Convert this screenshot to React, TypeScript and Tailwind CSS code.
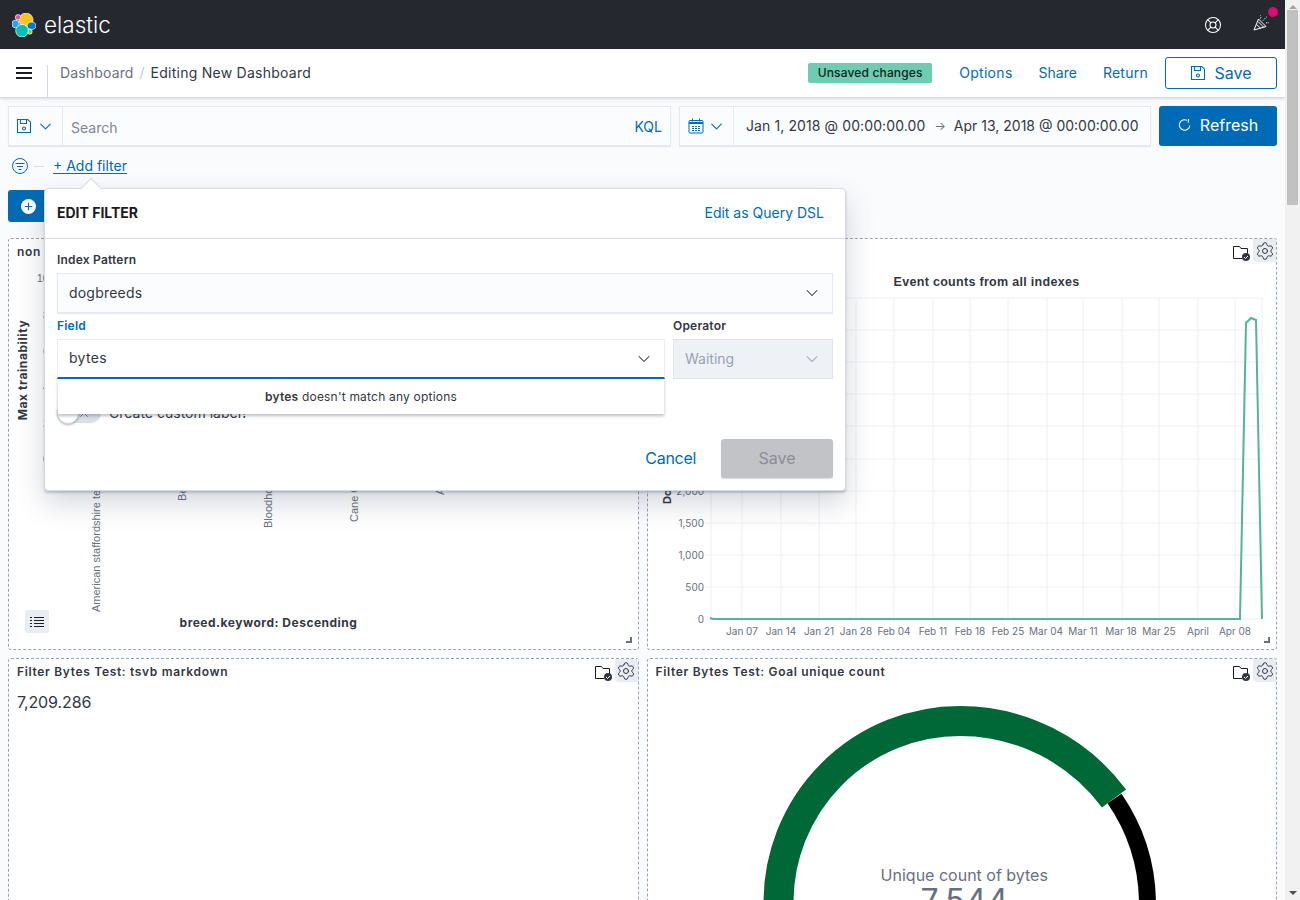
import { ChevronDown, LifeBuoy, Settings, X } from 'lucide-react'

const SaveIcon = ({ className }: { className?: string }) => (
  <svg viewBox="0 0 16 16" fill="none" stroke="currentColor" strokeWidth="1.1" className={className}>
    <path d="M1.5 1.5h10.3l2.7 2.7v10.3h-13z" />
    <path d="M4.5 1.5v4h6v-4" />
    <circle cx="8" cy="10.5" r="1.5" />
  </svg>
)

const FolderCheck = () => (
  <svg viewBox="0 0 18 16" className="w-[18px] h-4" fill="none">
    <path d="M.5 1.5h6l1.5 2h6.5v7M.5 1.5v12h9" stroke="#1a1c21" />
    <circle cx="13" cy="12" r="4" fill="#343741" />
    <path d="M11 12l1.5 1.5 2.5-2.5" stroke="#fff" strokeWidth="1" />
  </svg>
)

function PanelHeader({ title }: { title: string }) {
  return (
    <div className="h-[25px] flex items-center justify-between pl-2 text-xs font-semibold tracking-[0.67px] text-[#343741]">
      <span className="pt-[1px]">{title}</span>
      <div className="flex items-center self-start">
        <span className="mr-[2px] mt-1 flex"><FolderCheck /></span>
        <span className="w-[23px] h-[23px] bg-[#e9edf3] rounded-bl flex items-center justify-center text-[#343741]">
          <Settings size={20} strokeWidth={1.2} />
        </span>
      </div>
    </div>
  )
}

const ResizeHandle = () => (
  <span className="absolute right-[6px] bottom-[6px] w-[6px] h-[6px] border-r-2 border-b-2 border-[#69707d]" />
)

const breeds = [
  { name: 'American staffordshire terrier', x: 96, y: 612 },
  { name: 'Beagle', x: 182, y: 501 },
  { name: 'Bloodhound', x: 268, y: 528 },
  { name: 'Cane Corso', x: 354, y: 522 },
  { name: 'Akita', x: 440, y: 495 },
]

function BreedChart() {
  return (
    <svg width="629" height="385" className="block">
      <g transform="translate(-9,-264)" fontFamily="Liberation Sans, sans-serif">
        {[['10', 278], ['8', 315], ['6', 351], ['4', 387], ['2', 423], ['0', 459]].map(([t, y]) => (
          <text key={t} x="49" y={Number(y) + 4} textAnchor="end" fontSize="11" fill="#69707d">{t}</text>
        ))}
        <text transform="translate(27,370) rotate(-90)" textAnchor="middle" fontSize="12" fontWeight="700" letterSpacing="0.6" fontFamily="Inter, sans-serif" fill="#343741">Max trainability</text>
        {breeds.map(b => (
          <text key={b.name} transform={`translate(${b.x + 4},${b.y}) rotate(-90)`} fontSize="11" fill="#69707d">{b.name}</text>
        ))}
        <text x="268.5" y="627" textAnchor="middle" fontSize="12" fontWeight="700" letterSpacing="0.5" fontFamily="Inter, sans-serif" fill="#343741">breed.keyword: Descending</text>
      </g>
    </svg>
  )
}

const gridX = [711, 742, 781, 819, 856, 894, 933, 970, 1008, 1047, 1083, 1122, 1159, 1198, 1235, 1262]
const gridY = [298, 330, 362, 394, 426, 459, 491, 523, 555, 587, 619]
const xLabels = [
  ['Jan 07', 742], ['Jan 14', 781], ['Jan 21', 819], ['Jan 28', 856], ['Feb 04', 894], ['Feb 11', 933], ['Feb 18', 970],
  ['Feb 25', 1008], ['Mar 04', 1046], ['Mar 11', 1083], ['Mar 18', 1121], ['Mar 25', 1159], ['April', 1198], ['Apr 08', 1235],
] as const
const yLabels = [['2,000', 491], ['1,500', 523], ['1,000', 555], ['500', 587], ['0', 619]] as const

function EventsChart() {
  return (
    <svg width="629" height="385" className="block">
      <g transform="translate(-648,-264)" fontFamily="Inter, sans-serif">
        <text x="986.5" y="286" textAnchor="middle" fontSize="12.5" fontWeight="700" fontFamily="Liberation Sans, sans-serif" letterSpacing="0.3" fill="#343741">Event counts from all indexes</text>
        {gridX.map(x => <line key={x} x1={x} x2={x} y1="298" y2="623" stroke="#eef0f3" />)}
        {gridY.map(y => <line key={y} x1="706" x2="1262" y1={y} y2={y} stroke="#eef0f3" />)}
        {yLabels.map(([t, y]) => (
          <text key={t} x="704" y={y + 4} textAnchor="end" fontSize="10" fill="#69707d">{t}</text>
        ))}
        {xLabels.map(([t, x]) => (
          <text key={t} x={x} y="635" textAnchor="middle" fontSize="10" fill="#69707d">{t}</text>
        ))}
        <text transform="translate(671,504) rotate(-90)" fontSize="11" fontWeight="700" fill="#343741">Do</text>
        <polyline points="710,618 713,619 1240,619 1246,323 1251,318 1256,320 1262,619" fill="none" stroke="#54b399" strokeWidth="2" />
      </g>
    </svg>
  )
}

function GaugeChart() {
  return (
    <div className="relative">
      <svg width="629" height="220" className="block">
        <g transform="translate(-648,-684)">
          <path d="M 1114.5 798.5 A 187.5 187.5 0 0 1 1147.5 903" fill="none" stroke="#000" strokeWidth="17" />
          <path d="M 778.5 903 A 181.5 181.5 0 0 1 960 721 A 191.8 191.8 0 0 1 1114 798.5" fill="none" stroke="#006837" strokeWidth="30" />
        </g>
      </svg>
      <div className="absolute left-0 right-0 top-[181px] flex flex-col items-center text-[#69707d]">
        <span className="text-base leading-5 ml-[5px]">Unique count of bytes</span>
        <span className="text-[32px] leading-8 tracking-[1px] ml-[6px]">7,544</span>
      </div>
    </div>
  )
}

function FilterModal() {
  return (
    <div className="absolute left-[44px] top-[188px] w-[802px] h-[303px] bg-white rounded-[4px] border border-[#d3dae6] shadow-[0_2px_2px_rgba(60,70,90,0.25),0_12px_28px_rgba(60,70,90,0.22)] text-[#343741]">
      <span className="absolute left-[38px] top-[-8px] w-[16px] h-[16px] rotate-45 bg-white border-l border-t border-[#d3dae6]" />
      <div className="relative h-[50px] border-b border-[#d3dae6] flex items-center justify-between pl-3 pr-[21px] pb-[1px]">
        <span className="text-sm font-bold text-[#1a1c21]">EDIT FILTER</span>
        <span className="text-sm text-[#006bb4]">Edit as Query DSL</span>
      </div>
      <div className="px-3 pt-[13px]">
        <div className="text-xs font-semibold h-[15px] leading-[15px] mb-[6px] tracking-[0.2px]">Index Pattern</div>
        <div className="h-10 bg-[#fbfcfd] border border-[#e4e8ef] shadow-[0_1px_1px_rgba(60,70,90,0.12)] flex items-center justify-between pl-[11px] pr-[10px] text-sm">
          <span className="tracking-[0.2px]">dogbreeds</span>
          <ChevronDown size={20} strokeWidth={1.25} />
        </div>
        <div className="grid grid-cols-[608px_160px] gap-x-2 mt-[5px]">
          <div className="relative">
            <div className="text-xs font-semibold h-[15px] leading-[15px] mb-[6px] text-[#006bb4] tracking-[0.2px]">Field</div>
            <div className="h-10 bg-white border border-[#e9ecf1] border-b-2 border-b-[#006bb4] flex items-center justify-between pl-[11px] pr-[10px] text-sm">
              <span className="tracking-[0.3px] pb-[2px]">bytes</span>
              <ChevronDown size={20} strokeWidth={1.25} />
            </div>
            <div className="absolute z-10 left-[1px] right-[1px] top-[61px] h-[35px] bg-white shadow-[0_2px_3px_rgba(60,70,90,0.35)] flex items-center justify-center text-xs tracking-[0.2px]">
              <span><b className="font-semibold">bytes</b> doesn't match any options</span>
            </div>
          </div>
          <div>
            <div className="text-xs font-semibold h-[15px] leading-[15px] mb-[6px] tracking-[0.2px]">Operator</div>
            <div className="h-10 bg-[#eef2f7] border border-[#dfe3ea] flex items-center justify-between pl-[11px] pr-[10px] text-sm text-[#98a2b3]">
              <span>Waiting</span>
              <ChevronDown size={20} strokeWidth={1.25} />
            </div>
          </div>
        </div>
        <div className="mt-6 h-5 flex items-center gap-2">
          <span className="relative w-[44px] h-5 rounded-full bg-[#d9dfe8] flex items-center justify-end pr-[6px] text-[#343741]">
            <span className="absolute left-0 top-[-1px] w-[22px] h-[22px] rounded-full bg-white border border-[#d3dae6] shadow-[0_1px_2px_rgba(60,70,90,0.4)]" />
            <X size={14} strokeWidth={1} className="mr-[4px]" />
          </span>
          <span className="text-sm">Create custom label?</span>
        </div>
        <div className="mt-4 flex justify-end items-center">
          <span className="text-base tracking-[-0.3px] text-[#006bb4] mr-[25px] pb-[2px]">Cancel</span>
          <span className="w-[112px] h-[39px] rounded-[3px] bg-[#c2c3c6] shadow-[0_1px_1px_rgba(60,70,90,0.2)] flex items-center justify-center text-base text-[#8b8d94] pb-[2px]">Save</span>
        </div>
      </div>
    </div>
  )
}

export default function App() {
  return (
    <div className="flex w-[1300px] h-[900px] overflow-hidden font-['Inter',sans-serif] text-[#343741]">
      <div className="relative w-[1285px] h-[900px] overflow-hidden bg-[#fafbfd]">
        {/* top nav */}
        <header className="h-[49px] bg-[#25282f] flex items-center justify-between pl-3 pr-4">
          <div className="flex items-center gap-2">
            <svg viewBox="0 0 24 24" className="w-6 h-6" stroke="#fff" strokeWidth="0.7">
              <circle cx="14" cy="7" r="7" fill="#fec514" />
              <circle cx="6" cy="4.3" r="2.7" fill="#f04e98" />
              <ellipse cx="3.6" cy="11" rx="3.6" ry="4" fill="#1ba9f5" />
              <ellipse cx="19.5" cy="12.7" rx="4.3" ry="3.7" fill="#0077cc" />
              <circle cx="17.7" cy="18.7" r="2.5" fill="#93c90e" />
              <circle cx="10" cy="17.7" r="6.3" fill="#00bfb3" />
            </svg>
            <span className="text-[22.5px] font-light text-white">elastic</span>
          </div>
          <div className="flex items-center">
            <LifeBuoy size={18} strokeWidth={1.4} className="text-white mr-[31px]" />
            <span className="relative mb-1">
              <svg viewBox="0 0 16 17" className="w-4 h-[17px] block" fill="none" stroke="#fff" strokeWidth="1">
                <path d="M1 16L5.5 5l7.5 7.5z" />
                <path d="M3.5 10.5l4.5 4M5 7.5l6 6" />
                <path d="M7.5 4.5c.5-1 .5-2 0-3M13 9c1-.5 2-.5 3 0M10 6.5l4-4" strokeDasharray="1.2 1.2" />
              </svg>
              <span className="absolute left-[15px] top-[-7px] w-[10px] h-[10px] rounded-full bg-[#dd0a73]" />
            </span>
          </div>
        </header>

        {/* breadcrumbs / actions */}
        <div className="h-[49px] bg-white border-b border-[#d3dae6] shadow-[0_1px_3px_rgba(60,70,90,0.18)] flex items-center justify-between pl-4 pr-2 relative">
          <div className="flex items-center text-sm">
            <svg viewBox="0 0 16 12" className="w-4 h-3 text-[#1a1c21]" stroke="currentColor" strokeWidth="2">
              <path d="M0 1h16M0 6h16M0 11h16" />
            </svg>
            <span className="w-px h-8 bg-[#d3dae6] ml-[15px] mr-3 self-end mt-4" />
            <span className="text-[#69707d] tracking-[0.15px]">Dashboard</span>
            <span className="text-[#c2c8d2] mx-[6px]">/</span>
            <span className="tracking-[0.25px]">Editing New Dashboard</span>
          </div>
          <div className="flex items-center text-sm text-[#006bb4]">
            <span className="h-5 w-[124px] rounded-[2px] bg-[#6dccb1] text-[#1a1c21] text-xs font-medium tracking-[0.15px] flex items-center justify-center mr-[27px]">Unsaved changes</span>
            <span className="mr-[26px] tracking-[0.3px]">Options</span>
            <span className="mr-[26px]">Share</span>
            <span className="mr-[17px] tracking-[0.25px]">Return</span>
            <span className="w-[112px] h-8 rounded-[3px] border border-[#006bb4] flex items-center justify-center gap-2 text-base">
              <SaveIcon className="w-4 h-4" /> Save
            </span>
          </div>
        </div>

        {/* query bar */}
        <div className="mt-2 px-2 h-10 flex gap-2 text-sm">
          <div className="w-[663px] h-10 bg-[#fbfcfd] border border-[#e4e8ef] shadow-[0_1px_1px_rgba(60,70,90,0.1)] flex items-center">
            <div className="w-[54px] h-full border-r border-[#e4e8ef] flex items-center justify-center gap-[4px] text-[#006bb4]">
              <SaveIcon className="w-4 h-4" />
              <ChevronDown size={19} strokeWidth={1.4} />
            </div>
            <span className="ml-2 text-[#7f8691] flex-1 pt-1">Search</span>
            <span className="text-[#006bb4] mr-2 pt-[2px]">KQL</span>
          </div>
          <div className="w-[472px] h-10 bg-[#fbfcfd] border border-[#e4e8ef] shadow-[0_1px_1px_rgba(60,70,90,0.1)] flex items-center">
            <div className="w-[54px] h-full border-r border-[#e4e8ef] flex items-center justify-center gap-[3px] text-[#006bb4]">
              <svg viewBox="0 0 16 16" className="w-4 h-4" fill="none" stroke="currentColor">
                <rect x="1" y="2.5" width="14" height="12.5" rx="1" />
                <path d="M1 5h14" strokeWidth="2" />
                <path d="M4.5 0.5v3M11.5 0.5v3" />
                <path d="M4 8.5h2M7 8.5h2M10 8.5h2M4 10.5h2M7 10.5h2M10 10.5h2M4 12.5h2M7 12.5h2M10 12.5h2" strokeWidth="1.2" />
              </svg>
              <ChevronDown size={19} strokeWidth={1.4} />
            </div>
            <span className="ml-3 tracking-[0.1px]">Jan 1, 2018 @ 00:00:00.00</span>
            <span className="ml-[9px] mr-2 text-[#69707d] text-xs">→</span>
            <span>Apr 13, 2018 @ 00:00:00.00</span>
          </div>
          <div className="w-[118px] h-10 bg-[#006bb4] rounded-[3px] text-white text-base flex items-center justify-center gap-2 pb-[2px]">
            <svg viewBox="0 0 16 16" className="w-[14px] h-[14px]" fill="none" stroke="currentColor" strokeWidth="1.2">
              <path d="M12 1v3.5h-1M13.5 8.5a6 6 0 1 1-3-5.8" />
            </svg>
            Refresh
          </div>
        </div>

        {/* filter row */}
        <div className="h-10 px-3 flex items-center text-sm">
          <svg viewBox="0 0 16 16" className="w-4 h-4 text-[#006bb4]" fill="none" stroke="currentColor" strokeWidth="1">
            <circle cx="8" cy="8" r="7.5" />
            <path d="M3.5 5.5h9M5 8.5h6M6.5 11.5h3" />
          </svg>
          <span className="w-[10px] h-px bg-[#d3dae6] ml-[6px] mr-[9px]" />
          <span className="text-[#006bb4] underline underline-offset-2">+ Add filter</span>
        </div>

        {/* add panel button */}
        <div className="mt-1 ml-2 w-[180px] h-8 rounded-[3px] bg-[#006bb4] flex items-center pl-[13px] text-white text-sm gap-2">
          <svg viewBox="0 0 16 16" className="w-[15px] h-[15px]">
            <circle cx="8" cy="8" r="8" fill="#fff" />
            <path d="M8 4v8M4 8h8" stroke="#006bb4" strokeWidth="1.2" />
          </svg>
          Add
        </div>

        {/* panels */}
        <div className="mt-4 px-2 grid grid-cols-2 gap-x-2 gap-y-2">
          <div className="relative h-[412px] bg-white border border-dashed border-[#98a2b3] rounded-[3px]">
            <PanelHeader title="non timebased line chart - dog data" />
            <BreedChart />
            <span className="absolute left-4 bottom-4 w-6 h-[23px] bg-[#e9edf3] rounded-[2px] flex items-center justify-center text-[#1a1c21]">
              <svg viewBox="0 0 14 12" className="w-[14px] h-3" stroke="currentColor" strokeWidth="1" fill="none">
                <path d="M0 1.5h2M4 1.5h10M0 4.5h2M4 4.5h10M0 7.5h2M4 7.5h10M0 10.5h2M4 10.5h10" />
              </svg>
            </span>
            <ResizeHandle />
          </div>
          <div className="relative h-[412px] bg-white border border-dashed border-[#98a2b3] rounded-[3px]">
            <PanelHeader title="Filter Bytes Test: Event" />
            <EventsChart />
            <ResizeHandle />
          </div>
          <div className="relative h-[412px] bg-white border border-dashed border-[#98a2b3] rounded-[3px]">
            <PanelHeader title="Filter Bytes Test: tsvb markdown" />
            <p className="px-2 mt-[6px] text-base text-[#343741] tracking-[-0.1px]">7,209.286</p>
          </div>
          <div className="relative h-[412px] bg-white border border-dashed border-[#98a2b3] rounded-[3px]">
            <PanelHeader title="Filter Bytes Test: Goal unique count" />
            <GaugeChart />
          </div>
        </div>

        <FilterModal />
      </div>

      {/* scrollbar */}
      <div className="w-[15px] h-[900px] bg-[#f1f1f1] flex flex-col items-center">
        <span className="mt-[5px] w-0 h-0 border-x-[4px] border-x-transparent border-b-[4px] border-b-[#a3a3a3]" />
        <span className="mt-[1px] w-[11px] h-[195px] bg-[#c1c1c1]" />
        <span className="mt-auto mb-[5px] w-0 h-0 border-x-[4px] border-x-transparent border-t-[4px] border-t-[#505050]" />
      </div>
    </div>
  )
}
